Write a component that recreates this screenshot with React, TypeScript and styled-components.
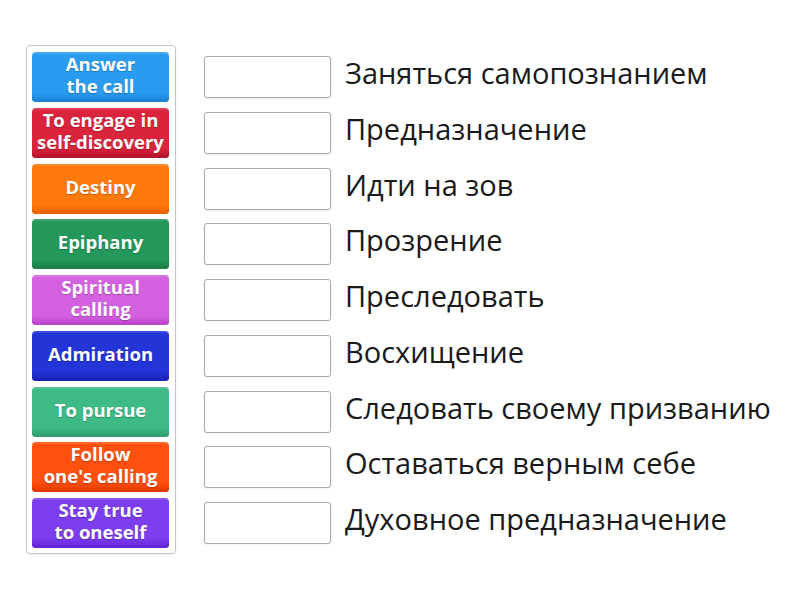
import styled, { createGlobalStyle } from "styled-components";

const GlobalStyle = createGlobalStyle`
  body {
    margin: 0;
    background: #ffffff;
    font-family: "Open Sans", sans-serif;
  }
`;

const tiles = [
  { text: "Answer\nthe call", color: "#2a9cf0", dark: "#1a84d8" },
  { text: "To engage in\nself-discovery", color: "#d9243c", dark: "#b8162c" },
  { text: "Destiny", color: "#ff7a0c", dark: "#ee6200" },
  { text: "Epiphany", color: "#23985a", dark: "#1a8048" },
  { text: "Spiritual\ncalling", color: "#d461e0", dark: "#bf45cf" },
  { text: "Admiration", color: "#2335d6", dark: "#1a22b8" },
  { text: "To pursue", color: "#3dba85", dark: "#2fa06f" },
  { text: "Follow\none's calling", color: "#ff5010", dark: "#e43a00" },
  { text: "Stay true\nto oneself", color: "#7d3ef0", dark: "#6424d8" },
];

const targets = [
  "Заняться самопознанием",
  "Предназначение",
  "Идти на зов",
  "Прозрение",
  "Преследовать",
  "Восхищение",
  "Следовать своему призванию",
  "Оставаться верным себе",
  "Духовное предназначение",
];

export default function App() {
  return (
    <>
      <GlobalStyle />
      <Page>
        <Bank>
          {tiles.map((t) => (
            <Tile key={t.text} $color={t.color} $dark={t.dark}>
              {t.text}
            </Tile>
          ))}
        </Bank>
        <Targets>
          {targets.map((t) => (
            <TargetRow key={t}>
              <DropBox />
              <Label>{t}</Label>
            </TargetRow>
          ))}
        </Targets>
      </Page>
    </>
  );
}

const Page = styled.div`
  display: flex;
  align-items: flex-start;
  padding: 45px 0 0 26px;
  width: 800px;
  height: 600px;
  box-sizing: border-box;
`;

const Bank = styled.div`
  width: 150px;
  box-sizing: border-box;
  border: 1px solid #c4c4c4;
  border-radius: 4px;
  padding: 6px 6px 5px 5px;
  display: flex;
  flex-direction: column;
  gap: 5.75px;
  box-shadow: 0 1px 2px rgba(0, 0, 0, 0.08);
`;

const Tile = styled.div<{ $color: string; $dark: string }>`
  height: 50px;
  border-radius: 4px;
  background: linear-gradient(${(p) => p.$color}, ${(p) => p.$color} 80%, ${(p) => p.$dark});
  box-shadow: inset 0 -3px 0 ${(p) => p.$dark}, inset 0 2px 0 rgba(255, 255, 255, 0.12);
  color: #ffffff;
  font-family: "Open Sans", sans-serif;
  font-weight: 700;
  font-size: 18.5px;
  line-height: 22px;
  text-align: center;
  white-space: pre-line;
  display: flex;
  align-items: center;
  justify-content: center;
  padding-bottom: 4px;
  box-sizing: border-box;
  text-shadow: 0 1px 1px rgba(0, 0, 0, 0.25);
`;

const Targets = styled.div`
  margin-left: 28px;
  padding-top: 11px;
  display: flex;
  flex-direction: column;
  gap: 13.75px;
`;

const TargetRow = styled.div`
  display: flex;
  align-items: center;
  height: 42px;
`;

const DropBox = styled.div`
  width: 127px;
  height: 42px;
  box-sizing: border-box;
  border: 1px solid #a8a8a8;
  border-radius: 3px;
  background: #ffffff;
  box-shadow: 0 1px 2px rgba(0, 0, 0, 0.06);
  flex-shrink: 0;
`;

const Label = styled.span`
  margin-left: 14px;
  margin-bottom: 8px;
  font-family: "Open Sans", sans-serif;
  font-size: 29px;
  line-height: 34px;
  color: #1a1a1a;
  white-space: nowrap;
`;
